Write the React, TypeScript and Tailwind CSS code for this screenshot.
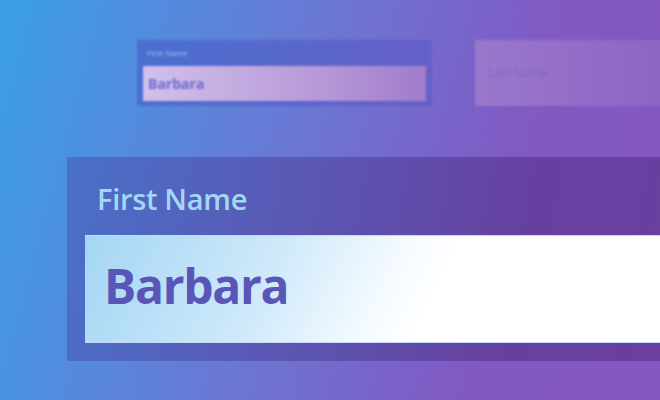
import React from 'react'

const font = { fontFamily: '"Open Sans", Lato, sans-serif' }

export default function App() {
  return (
    <div
      className="w-[660px] h-[400px] overflow-hidden flex flex-col bg-[linear-gradient(105deg,#3a9fe8_0%,#6a78d4_42%,#8258c2_75%,#8656bf_100%)]"
      style={font}
    >
      {/* blurred background form */}
      <div className="flex pt-[40px] pl-[137px] gap-[43px] blur-[1.2px] shrink-0">
        <div className="w-[295px] h-[66px] shrink-0 flex flex-col px-[6px] bg-[linear-gradient(90deg,#4a70d0,#6660c8)]">
          <div className="h-[26px] pl-[4px] pt-[9px] text-[8px] leading-none text-[#9ec2ee]">First Name</div>
          <div className="h-[35px] flex items-center pl-[5px] text-[14px] font-bold text-[#6a6ccc] bg-[linear-gradient(90deg,#d2c0ec,#b89ad8_60%,#a07ccc)]">
            Barbara
          </div>
        </div>
        <div className="w-[220px] h-[66px] shrink-0 flex items-center pl-[13px] text-[12px] text-[#8066c0] bg-[linear-gradient(90deg,#9a78cc,#8a62c4)]">
          Last Name
        </div>
      </div>

      {/* focused form */}
      <div className="mt-[51px] ml-[67px] w-[640px] h-[204px] shrink-0 flex flex-col pl-[18px] bg-[linear-gradient(100deg,#4a70c8_0%,#5a58b4_35%,#6640a0_70%,#6a3fa0_100%)]">
        <div className="h-[78px] pl-[12px] pt-[27px] text-[29px] leading-none font-semibold text-[#a2d8f6] tracking-[-0.3px]">
          First Name
        </div>
        <div className="h-[108px] flex items-center pl-[19px] border-t border-b border-[#c8d8f8] bg-[linear-gradient(115deg,#a4d6f4_0%,#cfe9fa_30%,#f4faff_48%,#ffffff_56%,#ffffff_100%)]">
          <span className="text-[48px] leading-none font-bold text-[#5a56b8] tracking-[-1.3px] pb-[6px]">Barbara</span>
        </div>
      </div>
    </div>
  )
}
